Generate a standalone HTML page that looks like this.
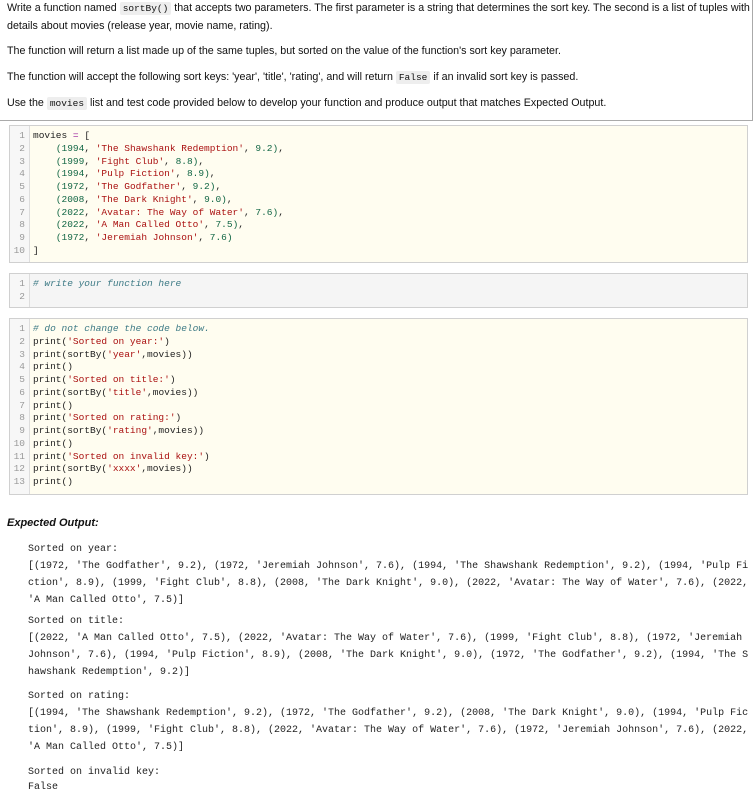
<!DOCTYPE html>
<html><head><meta charset="utf-8"><style>
*{margin:0;padding:0;box-sizing:border-box}
body{width:755px;height:808px;background:#fff;font-family:"Liberation Sans",Arial,sans-serif;font-size:10.7px;color:#111;position:relative;overflow:hidden}
.top{position:absolute;left:0;top:0;width:753px;height:121px;border-right:1px solid #aaa;border-bottom:1px solid #aaa}
.top p{position:absolute;left:7px;line-height:14px;white-space:nowrap}
code{font-family:"Liberation Mono",monospace;font-size:9.5px;background:#eee;padding:1px 3px;border-radius:2px}
.cb{position:absolute;left:9px;width:739px;border:1px solid #d0d0d0;background:#fffdf0;font-family:"Liberation Mono",monospace;font-size:9.5px;line-height:12.75px}
.g{position:absolute;left:0;top:0;bottom:0;width:20px;border-right:1px solid #ddd;background:#f7f7f7;color:#999;text-align:right;padding-right:4px;padding-top:4px;white-space:pre}
.c{position:absolute;left:23px;top:4px;white-space:pre;color:#222}
.n{color:#164}.s{color:#a11}.o{color:#981a9a}.cm{color:#3d7a85;font-style:italic}
.out{position:absolute;left:28px;font-family:"Liberation Mono",monospace;font-size:10px;line-height:17px;white-space:pre;color:#222}
</style></head><body>
<div class="top">
<p style="top:1px">Write a function named <code>sortBy()</code> that accepts two parameters. The first parameter is a string that determines the sort key. The second is a list of tuples with</p>
<p style="top:19px">details about movies (release year, movie name, rating).</p>
<p style="top:44px">The function will return a list made up of the same tuples, but sorted on the value of the function's sort key parameter.</p>
<p style="top:70px">The function will accept the following sort keys: 'year', 'title', 'rating', and will return <code>False</code> if an invalid sort key is passed.</p>
<p style="top:96px">Use the <code>movies</code> list and test code provided below to develop your function and produce output that matches Expected Output.</p>
</div>
<div class="cb" style="top:125px;height:138px"><div class="g">1
2
3
4
5
6
7
8
9
10</div><div class="c">movies <span class="o">=</span> [
    <span class="n">(1994</span>, <span class="s">'The Shawshank Redemption'</span>, <span class="n">9.2)</span>,
    <span class="n">(1999</span>, <span class="s">'Fight Club'</span>, <span class="n">8.8)</span>,
    <span class="n">(1994</span>, <span class="s">'Pulp Fiction'</span>, <span class="n">8.9)</span>,
    <span class="n">(1972</span>, <span class="s">'The Godfather'</span>, <span class="n">9.2)</span>,
    <span class="n">(2008</span>, <span class="s">'The Dark Knight'</span>, <span class="n">9.0)</span>,
    <span class="n">(2022</span>, <span class="s">'Avatar: The Way of Water'</span>, <span class="n">7.6)</span>,
    <span class="n">(2022</span>, <span class="s">'A Man Called Otto'</span>, <span class="n">7.5)</span>,
    <span class="n">(1972</span>, <span class="s">'Jeremiah Johnson'</span>, <span class="n">7.6)</span>
]</div></div>
<div class="cb" style="top:273px;height:35px;background:#f5f5f5"><div class="g">1
2</div><div class="c"><span class="cm"># write your function here</span></div></div>
<div class="cb" style="top:318px;height:177px"><div class="g">1
2
3
4
5
6
7
8
9
10
11
12
13</div><div class="c"><span class="cm"># do not change the code below.</span>
print(<span class="s">'Sorted on year:'</span>)
print(sortBy(<span class="s">'year'</span>,movies))
print()
print(<span class="s">'Sorted on title:'</span>)
print(sortBy(<span class="s">'title'</span>,movies))
print()
print(<span class="s">'Sorted on rating:'</span>)
print(sortBy(<span class="s">'rating'</span>,movies))
print()
print(<span class="s">'Sorted on invalid key:'</span>)
print(sortBy(<span class="s">'xxxx'</span>,movies))
print()</div></div>
<div style="position:absolute;left:7px;top:517px;font-weight:bold;font-style:italic;font-size:11px">Expected Output:</div>
<div class="out" style="top:541px">Sorted on year:
[(1972, 'The Godfather', 9.2), (1972, 'Jeremiah Johnson', 7.6), (1994, 'The Shawshank Redemption', 9.2), (1994, 'Pulp Fi
ction', 8.9), (1999, 'Fight Club', 8.8), (2008, 'The Dark Knight', 9.0), (2022, 'Avatar: The Way of Water', 7.6), (2022,
'A Man Called Otto', 7.5)]</div>
<div class="out" style="top:613px">Sorted on title:
[(2022, 'A Man Called Otto', 7.5), (2022, 'Avatar: The Way of Water', 7.6), (1999, 'Fight Club', 8.8), (1972, 'Jeremiah
Johnson', 7.6), (1994, 'Pulp Fiction', 8.9), (2008, 'The Dark Knight', 9.0), (1972, 'The Godfather', 9.2), (1994, 'The S
hawshank Redemption', 9.2)]</div>
<div class="out" style="top:688px">Sorted on rating:
[(1994, 'The Shawshank Redemption', 9.2), (1972, 'The Godfather', 9.2), (2008, 'The Dark Knight', 9.0), (1994, 'Pulp Fic
tion', 8.9), (1999, 'Fight Club', 8.8), (2022, 'Avatar: The Way of Water', 7.6), (1972, 'Jeremiah Johnson', 7.6), (2022,
'A Man Called Otto', 7.5)]</div>
<div class="out" style="top:765px;line-height:15px">Sorted on invalid key:
False</div>
</body></html>
